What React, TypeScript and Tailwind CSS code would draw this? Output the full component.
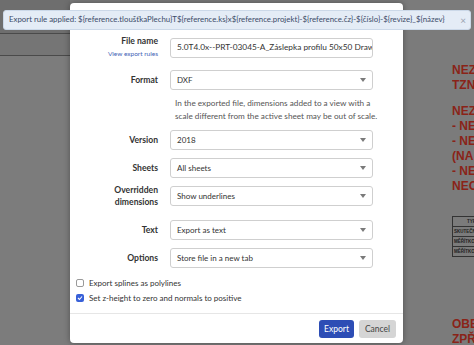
import React from 'react';

const ff = { fontFamily: 'Lato, "Noto Sans", sans-serif' };

const Chevron = () => (
  <svg width="6" height="4" viewBox="0 0 6 4" className="absolute right-[6px] top-1/2 -translate-y-1/2">
    <path d="M0 0 L6 0 L3 4 Z" fill="#7a7a7a" />
  </svg>
);

const Select = ({ value }: { value: string }) => (
  <div className="relative flex h-[20px] w-[203px] items-center rounded-[3px] border border-[#cfcfcf] bg-white pl-[6px] text-[8px] text-[#333]">
    {value}
    <Chevron />
  </div>
);

const Row = ({ label, children, className = '' }: { label: React.ReactNode; children: React.ReactNode; className?: string }) => (
  <div className={`flex shrink-0 items-center ${className}`}>
    <div className="w-[88px] text-right text-[8.6px] font-bold leading-[12px] text-[#333]">{label}</div>
    <div className="ml-[12px]">{children}</div>
  </div>
);

export default function App() {
  return (
    <div className="relative h-[345px] w-[474px] overflow-hidden bg-[#7b7b7b]" style={ff}>
      <div className="flex h-full">
        {/* page behind, left */}
        <div className="flex w-[70px] flex-col">
          <div className="h-[33px] bg-[#6e6e6e]" />
          <div className="h-[1px] bg-[#4a4a4a]" />
          <div className="h-[21px] bg-[#757575]" />
          <div className="h-[1px] bg-[#4a4a4a]" />
          <div className="flex-1 bg-[#7c7c7c]" />
        </div>

        {/* dialog */}
        <div className="mt-[3px] mb-[2px] flex w-[333px] flex-col rounded-[4px] bg-white shadow-[0_0_6px_rgba(0,0,0,0.35)]">
          <div className="h-[32px] shrink-0" />
          <Row
            label={
              <div className="flex flex-col items-end">
                <span>File name</span>
                <span className="mt-[1px] text-[6.5px] font-normal text-[#3f63b5]">View export rules</span>
              </div>
            }
          >
            <div className="flex h-[20px] w-[203px] items-center overflow-hidden whitespace-nowrap rounded-[3px] border border-[#cfcfcf] bg-white pl-[6px] text-[8.3px] text-[#333]">
              5.0T4.0x--PRT-03045-A_Záslepka profilu 50x50 Drawing 1
            </div>
          </Row>
          <Row label="Format" className="mt-[10px]">
            <Select value="DXF" />
          </Row>
          <div className="ml-[105px] mt-[7px] w-[205px] shrink-0 text-[8.2px] leading-[13px] text-[#555]">
            In the exported file, dimensions added to a view with a scale different from the active sheet may be out of scale.
          </div>
          <Row label="Version" className="mt-[7px]">
            <Select value="2018" />
          </Row>
          <Row label="Sheets" className="mt-[8px]">
            <Select value="All sheets" />
          </Row>
          <Row
            label={
              <>
                Overridden
                <br />
                dimensions
              </>
            }
            className="mt-[6px]"
          >
            <Select value="Show underlines" />
          </Row>
          <Row label="Text" className="mt-[12px]">
            <Select value="Export as text" />
          </Row>
          <Row label="Options" className="mt-[8px]">
            <Select value="Store file in a new tab" />
          </Row>

          <div className="ml-[6px] mt-[9px] flex shrink-0 flex-col gap-[3px] text-[8px] text-[#333]">
            <label className="flex h-[12px] items-center gap-[5px]">
              <span className="h-[8px] w-[8px] rounded-[2px] border border-[#9a9a9a] bg-white" />
              Export splines as polylines
            </label>
            <label className="flex h-[12px] items-center gap-[5px]">
              <span className="flex h-[8px] w-[8px] items-center justify-center rounded-[2px] bg-[#3860d8]">
                <svg width="6" height="6" viewBox="0 0 6 6">
                  <path d="M1 3 L2.5 4.5 L5 1.5" stroke="white" strokeWidth="1.1" fill="none" />
                </svg>
              </span>
              Set z-height to zero and normals to positive
            </label>
          </div>

          <div className="mt-[9px] h-[1px] shrink-0 bg-[#e6e6e6]" />
          <div className="flex shrink-0 justify-end gap-[5px] pr-[7px] pt-[6px]">
            <button className="h-[18px] w-[35px] rounded-[3px] bg-[#2d4db5] text-[8.5px] text-white">Export</button>
            <button className="h-[18px] w-[37px] rounded-[3px] bg-[#d5d5d5] text-[8.5px] text-[#444]">Cancel</button>
          </div>
        </div>

        {/* page behind, right */}
        <div
          className="ml-[49px] flex flex-1 flex-col overflow-hidden whitespace-nowrap pt-[63px] text-[12px] font-bold leading-[15px] text-[#8a2318]"
          style={{ fontFamily: '"Liberation Sans", Arial, sans-serif' }}
        >
          <div>NEZAKÓTOVANÉ</div>
          <div>TZN</div>
          <div className="mt-[11px]">NEZADANÉ</div>
          <div>- NEZADANÉ</div>
          <div>- NEZADANÉ</div>
          <div>(NA</div>
          <div>- NEZADANÉ</div>
          <div>NEOZNAČENÉ</div>
          <table className="mt-[22px] border-collapse text-[4.5px] leading-[9px] text-[#222]">
            <tbody>
              <tr>
                <td className="border border-[#333] pl-[14px]">TYP</td>
              </tr>
              <tr>
                <td className="border border-[#333] pl-[1px]">SKUTEČNÁ</td>
              </tr>
              <tr>
                <td className="border border-[#333] pl-[1px]">MĚŘÍTKO</td>
              </tr>
              <tr>
                <td className="border border-[#333] pl-[1px]">MĚŘÍTKO</td>
              </tr>
            </tbody>
          </table>
          <div className="mt-[60px]">OBECNÉ</div>
          <div>ZPŘESNĚNÍ</div>
        </div>
      </div>

      {/* toast */}
      <div className="absolute left-[3px] top-[10px] flex h-[20px] w-[468px] items-center rounded-[3px] border border-[#cbd8e8] bg-[#e4ecf6] pl-[5px] text-[7.85px] text-[#3b4b68]">
        <span className="whitespace-nowrap">
          Export rule applied: ${'{'}reference.tloušťkaPlechu{'}'}T${'{'}reference.ks{'}'}x${'{'}reference.projekt{'}'}-${'{'}reference.čz{'}'}-${'{'}číslo{'}'}-${'{'}revize{'}'}_${'{'}název{'}'}
        </span>
        <span className="absolute right-[4px] text-[10px] text-[#9aa3b0]">×</span>
      </div>
    </div>
  );
}
